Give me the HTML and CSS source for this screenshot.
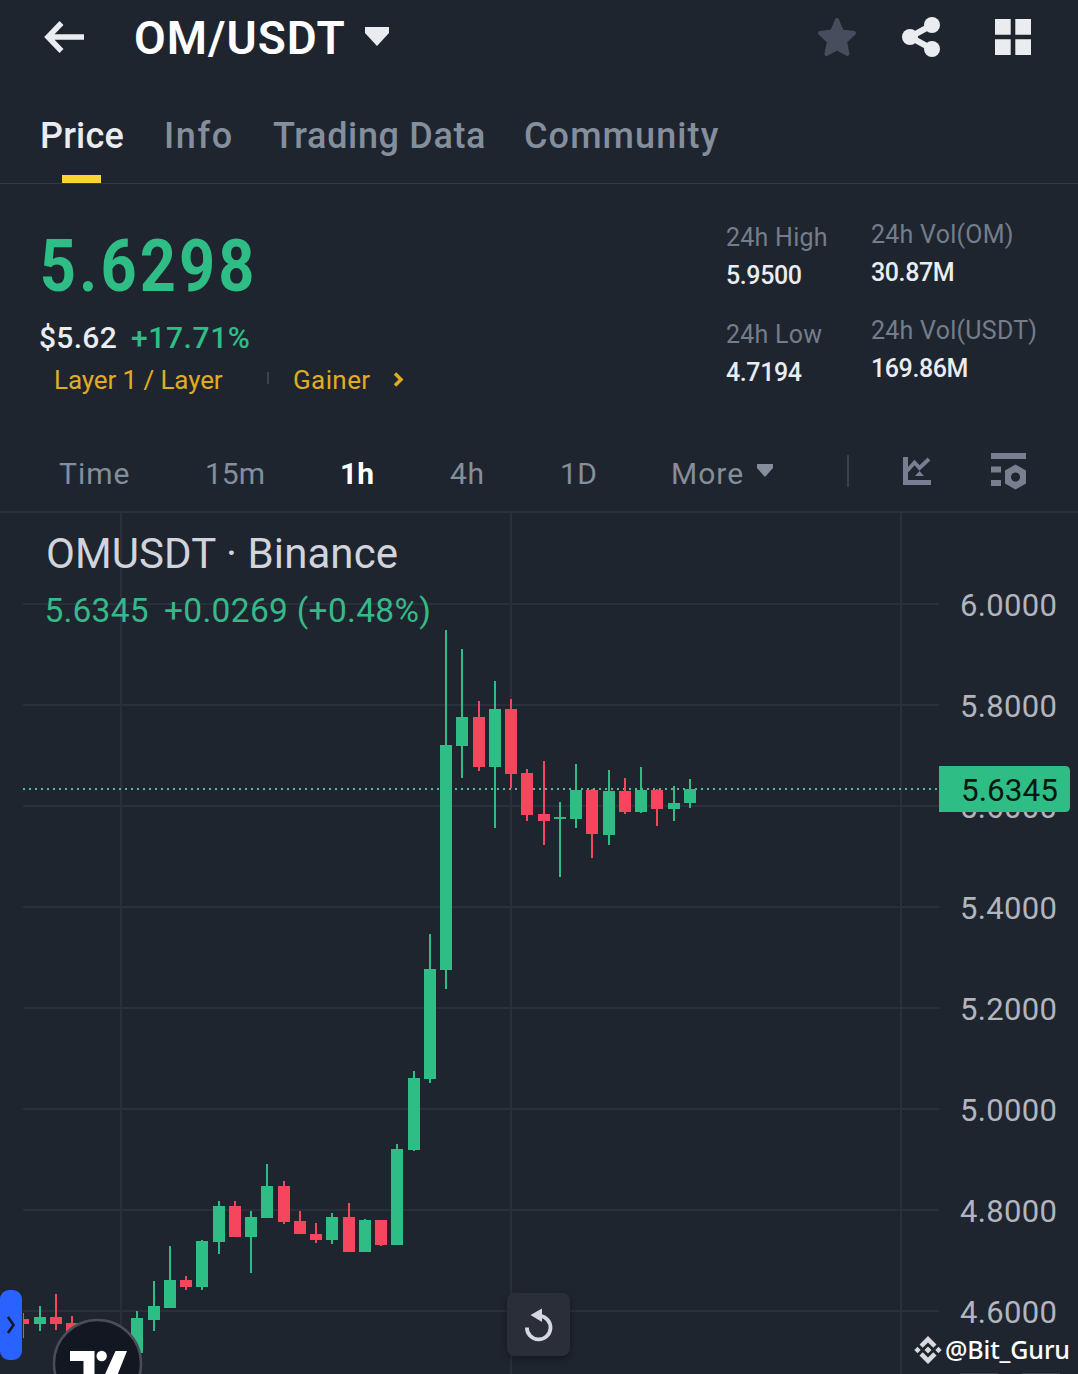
FILE: index.html
```html
<!DOCTYPE html>
<html lang="en">
<head>
    <meta charset="UTF-8">
    <meta name="viewport" content="width=device-width, initial-scale=1.0">
    <title>OM/USDT</title>
    <link rel="stylesheet" href="styles.css">
</head>
<body>
    <header class="topbar">
        <svg class="back" width="42" height="34" viewBox="0 0 42 34">
            <path d="M17.500 3L4 17l13.500 14M4 17h36" fill="none" stroke="#eaecef" stroke-width="5.500"/>
        </svg>
        <h1 class="pair"><span>OM/USDT</span></h1>
        <svg class="caret" width="24" height="19" viewBox="0 0 24 19">
            <path d="M0 0h24v6L12 19 0 6z" fill="#eaecef"/>
        </svg>
        <svg class="star" width="40" height="40" viewBox="0 0 40 40">
            <path d="M20 3l4.800 11.500L37 16l-9 8.500L30.500 37 20 31.500 9.500 37 12 24.500 3 16l12.200-1.500z" fill="#474d5c" stroke="#474d5c" stroke-width="4" stroke-linejoin="round"/>
        </svg>
        <svg class="share" width="40" height="42" viewBox="0 0 40 42">
            <path d="M31 9L9 21l22 12" fill="none" stroke="#eaecef" stroke-width="6"/>
            <circle cx="31" cy="9" r="8" fill="#eaecef"/>
            <circle cx="9" cy="21" r="8" fill="#eaecef"/>
            <circle cx="31" cy="33" r="8" fill="#eaecef"/>
        </svg>
        <svg class="apps" width="36" height="36" viewBox="0 0 36 36">
            <path d="M0 0h15.700v15.700H0zM20.300 0H36v15.700H20.300zM0 20.300h15.700V36H0zM20.300 20.300H36V36H20.300z" fill="#eaecef"/>
        </svg>
    </header>

    <nav class="tabs">
        <a class="tab tab-price active">Price</a>
        <a class="tab tab-info">Info</a>
        <a class="tab tab-data">Trading Data</a>
        <a class="tab tab-community">Community</a>
    </nav>

    <section class="quote">
        <div class="quote-main">
            <div class="price">5.6298</div>
            <div class="change"><span class="usd">$5.62</span><span class="percent">+17.71%</span></div>
            <div class="tags">
                <span class="tag-layer">Layer 1 / Layer</span>
                <span class="tag-sep"></span>
                <span class="tag-gainer">Gainer</span>
                <svg width="12" height="16" viewBox="0 0 12 16">
                    <path d="M2 1.500l6 6-6 6" fill="none" stroke="#e0ad20" stroke-width="3.500"/>
                </svg>
            </div>
        </div>
        <div class="stats">
            <div class="stat"><span class="label">24h High</span><span class="value">5.9500</span></div>
            <div class="stat"><span class="label">24h Low</span><span class="value">4.7194</span></div>
        </div>
        <div class="stats stats-vol">
            <div class="stat"><span class="label">24h Vol(OM)</span><span class="value">30.87M</span></div>
            <div class="stat"><span class="label">24h Vol(USDT)</span><span class="value">169.86M</span></div>
        </div>
    </section>

    <div class="intervals">
        <span class="iv-time">Time</span>
        <span class="iv-15m">15m</span>
        <span class="iv-1h">1h</span>
        <span class="iv-4h">4h</span>
        <span class="iv-1d">1D</span>
        <span class="iv-more">More</span>
        <svg class="more-caret" width="16" height="13" viewBox="0 0 16 13">
            <path d="M0 0h16v4l-8 9-8-9z" fill="#848e9c"/>
        </svg>
        <i class="divider"></i>
        <svg class="chart-icon" width="28" height="30" viewBox="0 0 28 30">
            <path d="M2.500 1v25.500H28" fill="none" stroke="#777f90" stroke-width="5"/>
            <path d="M4 15l7.500-8.500 5 5.500L26 3" fill="none" stroke="#777f90" stroke-width="3.800"/>
            <path d="M12 20l4.500-5 4.500 5z" fill="#777f90"/>
        </svg>
        <svg class="settings-icon" width="36" height="38" viewBox="0 0 36 38">
            <path d="M0 4h35M0 17.500h10M0 31h10" fill="none" stroke="#777f90" stroke-width="6"/>
            <path fill-rule="evenodd" d="M24.500 12.500l10.500 6v13l-10.500 6-10.500-6v-13zM24.500 20.500a4.500 4.500 0 1 0 .01 0z" fill="#777f90"/>
        </svg>
    </div>

    <svg class="chart" width="1078" height="861" viewBox="0 513 1078 861">
        <defs>
            <clipPath id="plot"><rect x="23" y="513" width="916" height="861"/></clipPath>
            <filter id="shadow" x="-30%" y="-30%" width="160%" height="160%">
                <feDropShadow dx="0" dy="3" stdDeviation="4" flood-color="#000" flood-opacity=".4"/>
            </filter>
        </defs>
        <g id="grid" class="grid"></g>
        <path d="M23 789H939" class="last-line"/>
        <g id="candles" clip-path="url(#plot)"></g>
        <g id="axis" class="axis"></g>

        <text class="symbol" x="46" y="568" textLength="352">OMUSDT · Binance</text>
        <text class="legend" x="44.500" y="622" textLength="104">5.6345</text>
        <text class="legend" x="164" y="622" textLength="267">+0.0269 (+0.48%)</text>

        <path d="M939 766h126q5 0 5 5v36q0 5-5 5H939z" fill="#2ebd85"/>
        <text class="last-price" x="961" y="801" textLength="97">5.6345</text>

        <!-- drawer handle -->
        <rect x="0" y="1290" width="22" height="70" rx="9" fill="#2962ff"/>
        <path d="M8 1317l5.500 8-5.500 8" fill="none" stroke="#131722" stroke-width="2.500"/>

        <!-- TradingView mark -->
        <circle cx="97.500" cy="1363.500" r="43.500" fill="#131722" stroke="#4a4d59" stroke-width="2.500"/>
        <path d="M70 1351h24.500v30h-11v-20H70zM115.500 1351h11.500l-12 30h-13z" fill="#fff"/>
        <circle cx="101.700" cy="1356" r="5.200" fill="#fff"/>

        <!-- reset button -->
        <rect x="507" y="1293" width="63" height="63" rx="8" fill="#2a2e39" filter="url(#shadow)"/>
        <path d="M526.900 1327.500a11.800 11.800 0 1 0 13-11.600" fill="none" stroke="#d5d8e2" stroke-width="3.800"/>
        <path d="M530.500 1315l11.500-6.500v13.500z" fill="#d5d8e2"/>

        <!-- watermark -->
        <g fill="#d9dadc">
            <path d="M928 1336l8.500 8.500-3.200 3.200-5.300-5.200-5.300 5.200-3.200-3.200zM928 1364l-8.500-8.500 3.200-3.200 5.300 5.200 5.300-5.200 3.200 3.200zM928 1346.500l3.500 3.500-3.500 3.500-3.500-3.500zM917.500 1346.800l3.200 3.200-3.200 3.200-3.200-3.200zM938.500 1346.800l3.200 3.200-3.200 3.200-3.200-3.200z"/>
        </g>
        <text class="watermark" x="945" y="1359" textLength="125">@Bit_Guru</text>
        <path d="M960 1373.500h38M1022 1373.500h38" stroke="#3c424d"/>
    </svg>

    <script>
        // left, body top, body bottom, wick top, wick bottom, up
        const candles = [
            [17, 1319, 1324, 1313, 1338, 0],
            [34, 1317, 1324, 1306, 1331, 1],
            [50, 1317, 1324, 1294, 1330, 0],
            [66, 1323, 1335, 1316, 1338, 0],
            [131, 1318, 1353, 1311, 1353, 1],
            [148, 1306, 1320, 1281, 1331, 1],
            [164, 1280, 1308, 1246, 1308, 1],
            [180, 1280, 1287, 1276, 1290, 0],
            [196, 1241, 1287, 1240, 1290, 1],
            [213, 1206, 1242, 1201, 1254, 1],
            [229, 1206, 1237, 1201, 1237, 0],
            [245, 1217, 1237, 1211, 1273, 1],
            [261, 1186, 1218, 1164, 1218, 1],
            [278, 1186, 1222, 1181, 1224, 0],
            [294, 1221, 1234, 1211, 1234, 0],
            [310, 1234, 1240, 1223, 1243, 0],
            [326, 1217, 1240, 1213, 1244, 1],
            [343, 1217, 1252, 1203, 1252, 0],
            [359, 1220, 1252, 1219, 1252, 1],
            [375, 1220, 1245, 1220, 1246, 0],
            [391, 1149, 1245, 1144, 1245, 1],
            [408, 1078, 1150, 1071, 1151, 1],
            [424, 969, 1079, 934, 1083, 1],
            [440, 745, 970, 630, 989, 1],
            [456, 717, 746, 649, 778, 1],
            [473, 717, 767, 701, 771, 0],
            [489, 709, 767, 681, 828, 1],
            [505, 709, 774, 699, 788, 0],
            [521, 773, 815, 769, 821, 0],
            [538, 814, 821, 761, 845, 0],
            [554, 817, 819, 802, 877, 1],
            [570, 790, 819, 764, 828, 1],
            [586, 790, 834, 789, 858, 0],
            [603, 791, 835, 770, 845, 1],
            [619, 791, 812, 778, 814, 0],
            [635, 790, 812, 767, 813, 1],
            [651, 790, 809, 789, 826, 0],
            [668, 803, 809, 786, 821, 1],
            [684, 789, 803, 779, 808, 1]
        ];

        let bars = "";
        for (const [x, top, bottom, high, low, up] of candles) {
            bars += `<path class="${up ? "up" : "down"}" d="M${x} ${top}h12V${bottom}h-12zM${x + 5} ${high}h2V${low}h-2z"/>`;
        }
        document.getElementById("candles").innerHTML = bars;

        let lines = "";
        let labels = "";
        for (let i = 0; i < 8; i++) {
            const y = 604 + i * 101;
            lines += `<path d="M23 ${y}H939"/>`;
            labels += `<text x="960" y="${y + 12}" textLength="97">${(6 - i * 0.2).toFixed(4)}</text>`;
        }
        for (const x of [121, 511, 901]) {
            lines += `<path d="M${x} 513V1374"/>`;
        }
        document.getElementById("grid").innerHTML = lines;
        document.getElementById("axis").innerHTML = labels;
    </script>
</body>
</html>
```
FILE: styles.css
```css
* { box-sizing: border-box; }
body { margin: 0; width: 1078px; height: 1374px; overflow: hidden; background: #1f252f; color: #eaecef; font-family: Roboto, "Noto Sans", sans-serif; }
svg { display: block; flex: none; }
span, a { white-space: nowrap; }

.topbar { display: flex; align-items: center; height: 76px; padding-left: 44px; }
.back { margin-top: -3px; }
.pair { width: 232px; margin: 0 0 0 46px; padding-left: 2px; color: #fff; font-size: 46px; font-weight: 600; letter-spacing: 1px; }
.caret { margin: -3px 0 0 1px; }
.star { margin: -3px 0 0 428px; }
.share { margin: -3px 0 0 44px; }
.apps { margin: -2px 0 0 54px; }

.tabs { display: flex; height: 108px; padding: 39px 0 0 40px; border-bottom: 1px solid #343a44; font-size: 36px; font-weight: 500; line-height: 42px; color: #848e9c; }
.tab { position: relative; }
.tab-price { width: 124px; letter-spacing: .2px; }
.tab-info { width: 109px; letter-spacing: 1.6px; }
.tab-data { width: 251px; letter-spacing: .65px; }
.tab-community { letter-spacing: 1.1px; }
.active { color: #eaecef; }
.active::after { content: ""; position: absolute; left: 22px; bottom: 0; width: 39px; height: 8px; background: #fcd535; }

.quote { display: flex; height: 251px; }
.quote-main { width: 726px; padding: 43px 0 0 39px; }
.price { padding-left: 1px; font-size: 72.5px; font-weight: 700; line-height: 80px; color: #2ebd85; letter-spacing: 3.5px; transform: scaleX(.87); transform-origin: left; }
.change { display: flex; margin-top: 10px; font-size: 30px; font-weight: 500; line-height: 42px; }
.usd { width: 92px; letter-spacing: .3px; }
.percent { color: #2ebd85; letter-spacing: .6px; }
.tags { display: flex; align-items: center; height: 41px; padding-left: 15px; font-size: 26px; color: #e0ad20; }
.tag-layer { width: 213px; letter-spacing: -.1px; }
.tag-sep { width: 2px; height: 12px; margin-top: -3px; background: #3c434f; }
.tag-gainer { width: 100px; margin-left: 24px; letter-spacing: .4px; }
.stats { width: 145px; padding-top: 35px; font-size: 25px; }
.stats-vol { width: 200px; padding-top: 32px; }
.stat { display: flex; flex-direction: column; height: 97px; line-height: 38px; }
.stats-vol .stat { height: 96px; }
.label { color: #747d8b; letter-spacing: .25px; }
.value { font-weight: 500; letter-spacing: -.4px; }

.intervals { display: flex; align-items: center; height: 78px; padding-left: 59px; border-bottom: 2px solid #2a303a; font-size: 30px; color: #848e9c; }
.iv-time { width: 146px; letter-spacing: 1px; }
.iv-15m { width: 135px; }
.iv-1h { width: 110px; color: #fff; font-weight: 700; }
.iv-4h { width: 110px; letter-spacing: .6px; }
.iv-1d { width: 111px; letter-spacing: .4px; }
.iv-more { width: 86px; letter-spacing: 1px; }
.more-caret { margin-top: -6px; }
.divider { width: 2px; height: 32px; margin: -4px 0 0 74px; background: #3a414d; }
.chart-icon { margin: -4px 0 0 54px; }
.settings-icon { margin: -4px 0 0 60px; }

.grid { stroke: #2a303a; stroke-width: 2; }
.up { fill: #2ebd85; }
.down { fill: #f6465d; }
.last-line { stroke: #5cb594; stroke-width: 2; stroke-dasharray: 2 4; }
.axis { font-size: 31px; fill: #b2b5be; }
.symbol { font-size: 42px; fill: #d1d4dc; }
.legend { font-size: 33.5px; fill: #36b989; }
.last-price { font-size: 31.5px; fill: #0b1712; }
.watermark { font-family: "Noto Sans", sans-serif; font-size: 25px; font-weight: 500; fill: #fff; }
```
